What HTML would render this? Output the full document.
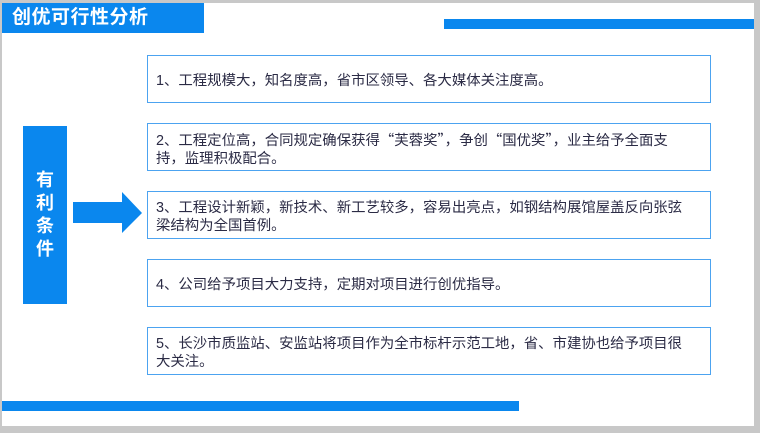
<!DOCTYPE html>
<html><head><meta charset="utf-8"><style>
*{margin:0;padding:0;box-sizing:border-box}
html,body{width:760px;height:433px;overflow:hidden;background:#c8c8c8}
.slide{position:absolute;left:2px;top:3px;width:752px;height:423px;background:#fff}
.abs{position:absolute}
.t{font-family:"Liberation Sans","Noto Sans CJK SC",sans-serif}
.q{font-family:"Noto Sans CJK SC",sans-serif}
.title{left:2px;top:3px;width:202px;height:30px;background:#0a87ee;color:#fff;font-weight:bold;font-size:19px;line-height:30px;padding-left:10px;letter-spacing:0.5px}
.bar{background:#0a87ee}
.box{left:147px;width:564px;height:48px;border:1.5px solid #4ca3f0;font-size:14.4px;line-height:18px;color:#2b2b45;padding:4px 0 0 8px;display:flex;align-items:center}
.box span.w{display:block;width:540px}
.left{left:23px;top:126px;width:44px;height:178px;background:#0a87ee;color:#fff;font-weight:bold;font-size:18px;line-height:23px;text-align:center;padding-top:43px}
</style></head><body>
<div class="slide"></div>
<div class="abs title t">创优可行性分析</div>
<div class="abs bar" style="left:444px;top:19px;width:310px;height:10px"></div>
<div class="abs bar" style="left:2px;top:401px;width:517px;height:10px"></div>
<div class="abs left t">有<br>利<br>条<br>件</div>
<svg class="abs" style="left:0;top:0" width="760" height="433"><polygon points="73,202 122,202 122,192 142,213 122,233 122,223 73,223" fill="#0a87ee"/></svg>
<div class="abs box t" style="top:55px"><span class="w">1、工程规模大，知名度高，省市区领导、各大媒体关注度高。</span></div>
<div class="abs box t" style="top:123px"><span class="w">2、工程定位高，合同规定确保获得<span class="q">“</span>芙蓉奖<span class="q">”</span>，争创<span class="q">“</span>国优奖<span class="q">”</span>，业主给予全面支<br>持，监理积极配合。</span></div>
<div class="abs box t" style="top:191px"><span class="w">3、工程设计新颖，新技术、新工艺较多，容易出亮点，如钢结构展馆屋盖反向张弦<br>梁结构为全国首例。</span></div>
<div class="abs box t" style="top:259px"><span class="w">4、公司给予项目大力支持，定期对项目进行创优指导。</span></div>
<div class="abs box t" style="top:327px"><span class="w">5、长沙市质监站、安监站将项目作为全市标杆示范工地，省、市建协也给予项目很<br>大关注。</span></div>
</body></html>
